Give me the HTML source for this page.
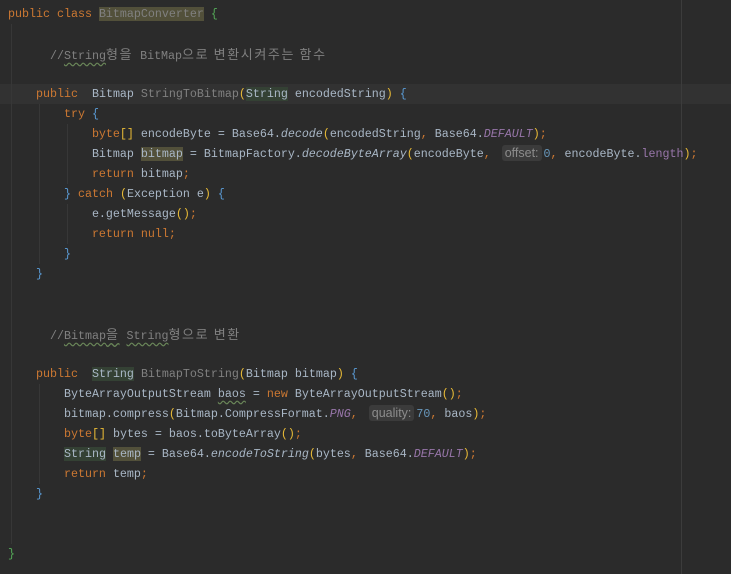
<!DOCTYPE html>
<html><head><meta charset="utf-8"><style>
html,body{margin:0;padding:0;background:#2b2b2b;width:731px;height:574px;overflow:hidden}
.l{position:absolute;left:8px;height:20px;line-height:20px;white-space:pre;font-family:"Liberation Mono","Noto Sans CJK KR",monospace;font-size:11.67px;color:#a9b7c6}
.k{color:#cc7832}.c{color:#808080}.g{color:#8c8c8c}.n{color:#6897bb}.s{color:#9876aa;font-style:italic}.i{font-style:italic}.f{color:#9876aa}
.hl{background:#52503a}.hs{background:#344134}
.y{color:#e8ba36}.b{color:#5a9bd5}.gr{color:#54a857}
.h{display:inline-block;background:#3b3b3b;color:#8c8c8c;font-family:"Liberation Sans",sans-serif;font-size:12.5px;line-height:16px;padding:0 3px;border-radius:3px;margin:0 2px 0 4px}
.w{text-decoration:underline wavy #6a8759;text-underline-offset:3px}
.ko{font-family:"Noto Sans CJK KR",sans-serif;font-size:13px;letter-spacing:1.6px}
.v{position:absolute;width:1px;background:#373737}
</style></head><body>
<div style="position:absolute;left:0;top:84px;width:731px;height:20px;background:#323232"></div>
<div class="v" style="left:681px;top:0;height:574px;background:#3c3c3c"></div>
<div class="v" style="left:11px;top:24px;height:520px"></div>
<div class="v" style="left:39px;top:104px;height:160px"></div>
<div class="v" style="left:67px;top:124px;height:60px"></div>
<div class="v" style="left:67px;top:204px;height:40px"></div>
<div class="v" style="left:39px;top:384px;height:100px"></div>
<div class="l" style="top:4px"><span class="k">public class </span><span class="hl" style="color:#808080">BitmapConverter</span> <span class="gr">{</span></div>
<div class="l" style="top:44px"><span class="c">      //<span class="w">String</span><span class="ko">형을</span> BitMap<span class="ko">으로 변환시켜주는 함수</span></span></div>
<div class="l" style="top:84px"><span class="k">    public  </span>Bitmap <span class="c">StringToBitmap</span><span class="y">(</span><span class="hs">String</span> encodedString<span class="y">)</span> <span class="b">{</span></div>
<div class="l" style="top:104px"><span class="k">        try </span><span class="b">{</span></div>
<div class="l" style="top:124px"><span class="k">            byte</span><span class="y">[]</span> encodeByte = Base64.<span class="i">decode</span><span class="y">(</span>encodedString<span class="k">,</span> Base64.<span class="s">DEFAULT</span><span class="y">)</span><span class="k">;</span></div>
<div class="l" style="top:144px">            Bitmap <span class="hl">bitmap</span> = BitmapFactory.<span class="i">decodeByteArray</span><span class="y">(</span>encodeByte<span class="k">,</span> <span class="h">offset:</span><span class="n">0</span><span class="k">,</span> encodeByte.<span class="f">length</span><span class="y">)</span><span class="k">;</span></div>
<div class="l" style="top:164px"><span class="k">            return </span>bitmap<span class="k">;</span></div>
<div class="l" style="top:184px">        <span class="b">}</span> <span class="k">catch </span><span class="y">(</span>Exception e<span class="y">)</span> <span class="b">{</span></div>
<div class="l" style="top:204px">            e.getMessage<span class="y">()</span><span class="k">;</span></div>
<div class="l" style="top:224px"><span class="k">            return null;</span></div>
<div class="l" style="top:244px">        <span class="b">}</span></div>
<div class="l" style="top:264px">    <span class="b">}</span></div>
<div class="l" style="top:324px"><span class="c">      //<span class="w">Bitmap</span><span class="ko w">을</span> <span class="w">String</span><span class="ko">형으로 변환</span></span></div>
<div class="l" style="top:364px"><span class="k">    public  </span><span class="hs">String</span> <span class="c">BitmapToString</span><span class="y">(</span>Bitmap bitmap<span class="y">)</span> <span class="b">{</span></div>
<div class="l" style="top:384px">        ByteArrayOutputStream <span class="w">baos</span> = <span class="k">new </span>ByteArrayOutputStream<span class="y">()</span><span class="k">;</span></div>
<div class="l" style="top:404px">        bitmap.compress<span class="y">(</span>Bitmap.CompressFormat.<span class="s">PNG</span><span class="k">,</span> <span class="h">quality:</span><span class="n">70</span><span class="k">,</span> baos<span class="y">)</span><span class="k">;</span></div>
<div class="l" style="top:424px"><span class="k">        byte</span><span class="y">[]</span> bytes = baos.toByteArray<span class="y">()</span><span class="k">;</span></div>
<div class="l" style="top:444px">        <span class="hs">String</span> <span class="hl">temp</span> = Base64.<span class="i">encodeToString</span><span class="y">(</span>bytes<span class="k">,</span> Base64.<span class="s">DEFAULT</span><span class="y">)</span><span class="k">;</span></div>
<div class="l" style="top:464px"><span class="k">        return </span>temp<span class="k">;</span></div>
<div class="l" style="top:484px">    <span class="b">}</span></div>
<div class="l" style="top:544px"><span class="gr">}</span></div>
</body></html>
